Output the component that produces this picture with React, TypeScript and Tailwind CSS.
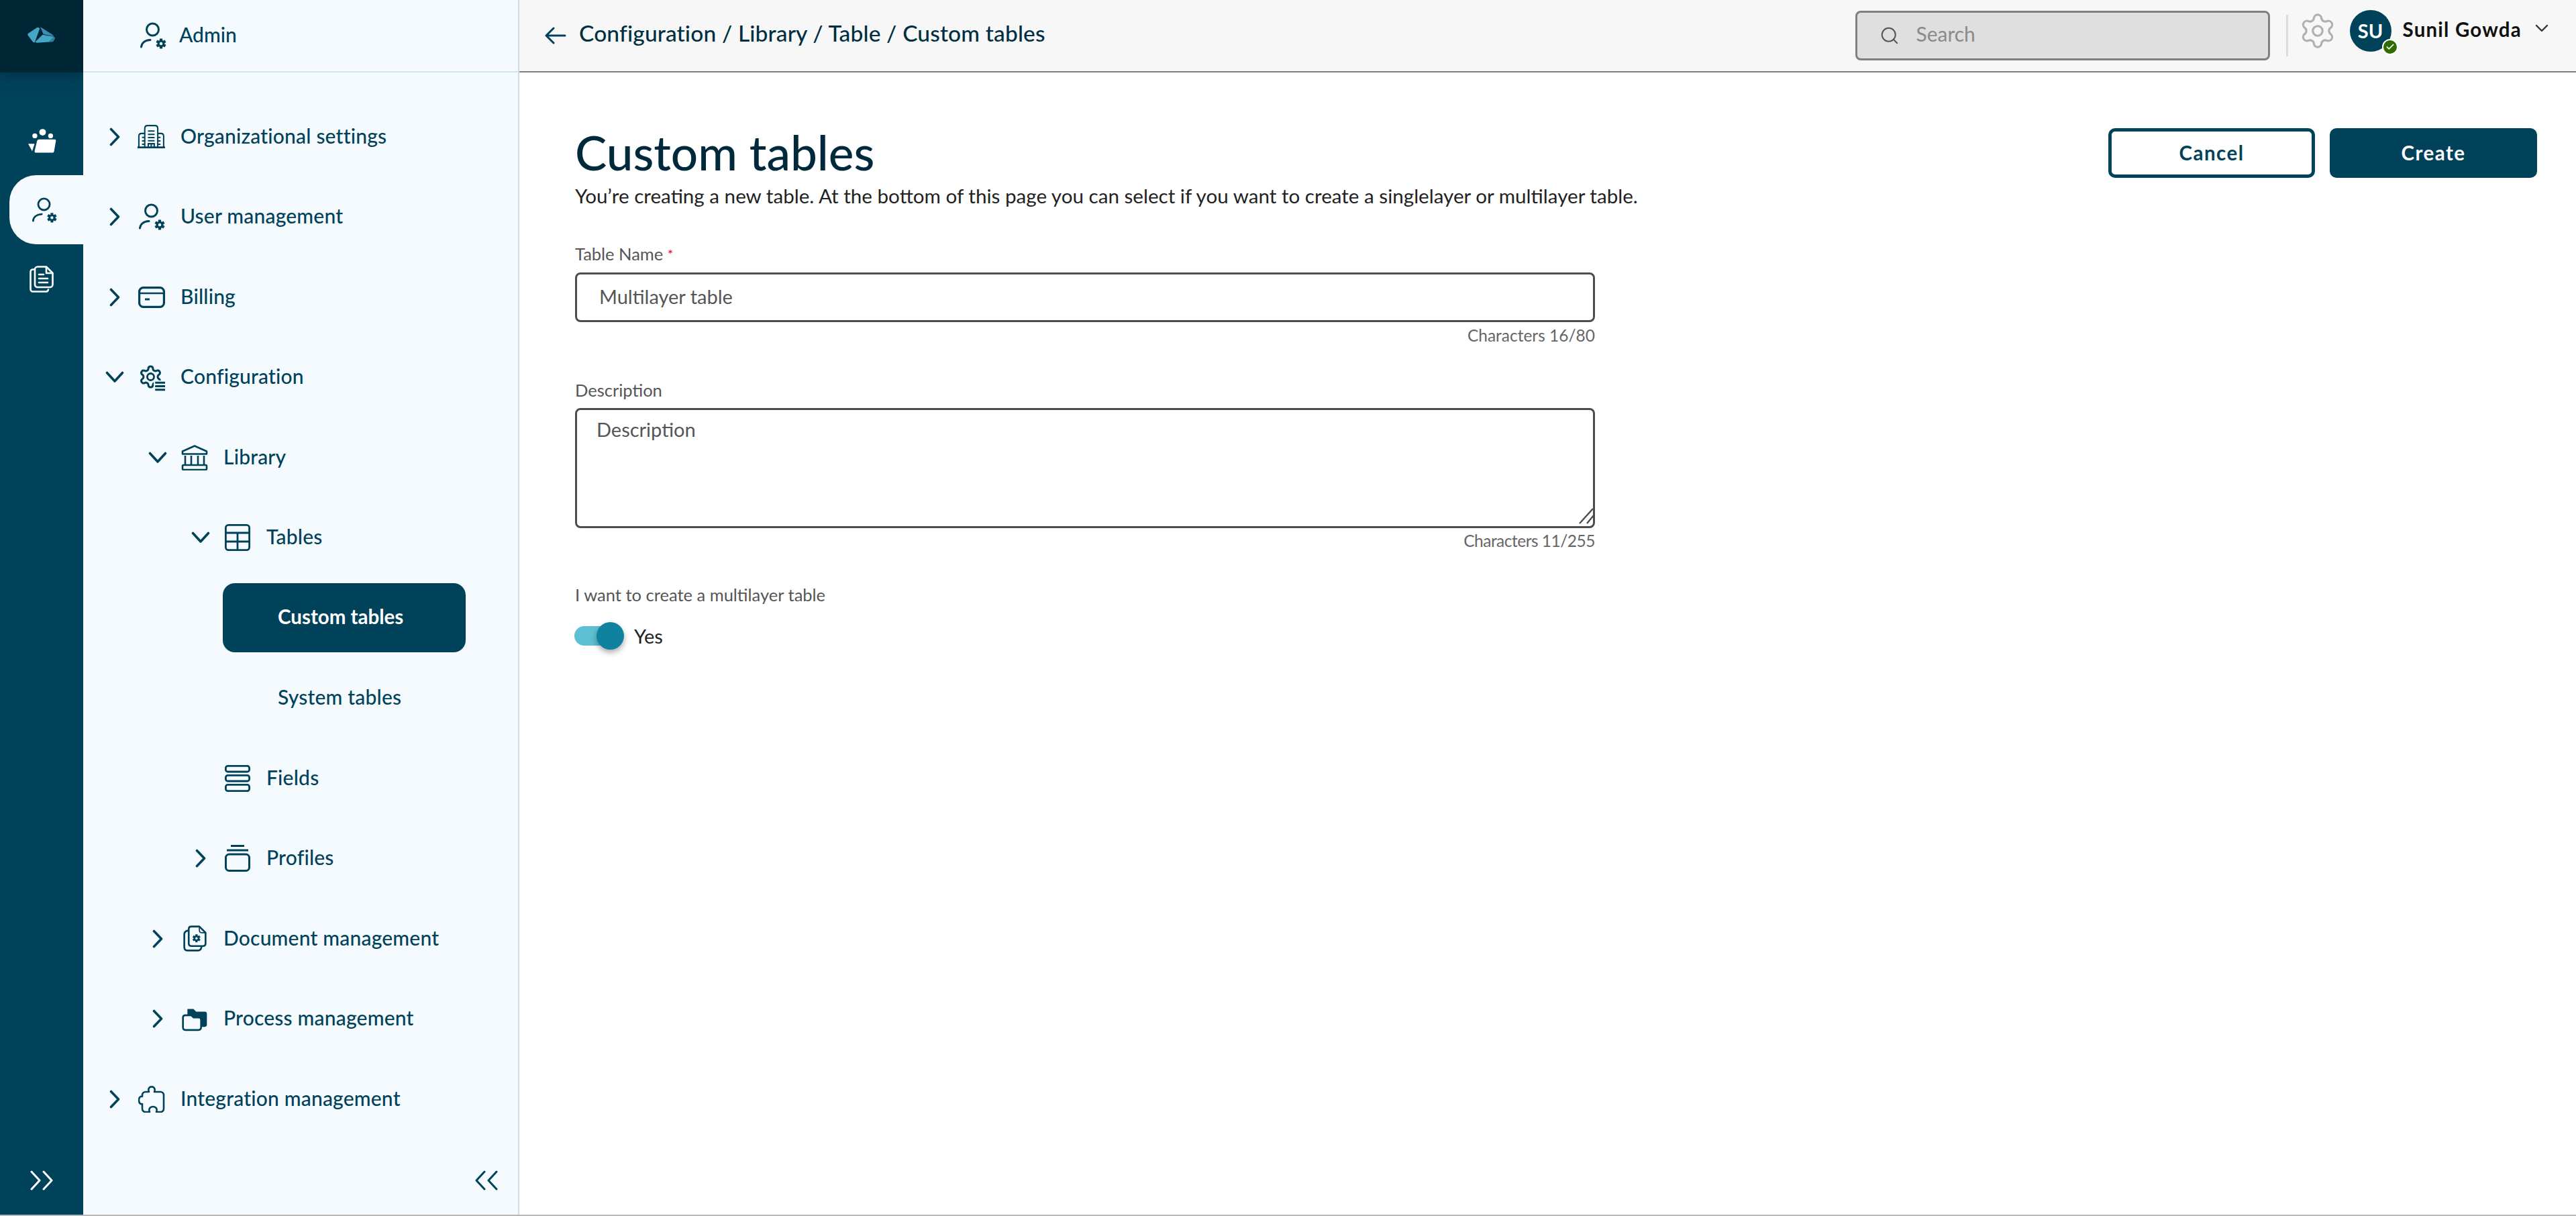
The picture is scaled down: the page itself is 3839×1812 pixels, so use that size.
import { useState } from "react";
import { Search, Settings, Check } from "lucide-react";

const GEAR =
  "M12.22 2h-.44a2 2 0 0 0-2 2v.18a2 2 0 0 1-1 1.73l-.43.25a2 2 0 0 1-2 0l-.15-.08a2 2 0 0 0-2.73.73l-.22.38a2 2 0 0 0 .73 2.73l.15.1a2 2 0 0 1 1 1.72v.51a2 2 0 0 1-1 1.74l-.15.09a2 2 0 0 0-.73 2.73l.22.38a2 2 0 0 0 2.73.73l.15-.08a2 2 0 0 1 2 0l.43.25a2 2 0 0 1 1 1.73V20a2 2 0 0 0 2 2h.44a2 2 0 0 0 2-2v-.18a2 2 0 0 1 1-1.73l.43-.25a2 2 0 0 1 2 0l.15.08a2 2 0 0 0 2.73-.73l.22-.39a2 2 0 0 0-.73-2.73l-.15-.08a2 2 0 0 1-1-1.74v-.5a2 2 0 0 1 1-1.74l.15-.09a2 2 0 0 0 .73-2.73l-.22-.38a2 2 0 0 0-2.73-.73l-.15.08a2 2 0 0 1-2 0l-.43-.25a2 2 0 0 1-1-1.73V4a2 2 0 0 0-2-2z";

// small solid cog used on the user and document icons
function Cog({ x, y, r, hole = "#f5faff" }: { x: number; y: number; r: number; hole?: string }) {
  return (
    <g>
      {[0, 60, 120, 180, 240, 300].map((a) => (
        <rect
          key={a}
          x={x - r * 0.28}
          y={y - r}
          width={r * 0.56}
          height={r * 0.6}
          fill="currentColor"
          transform={`rotate(${a} ${x} ${y})`}
        />
      ))}
      <circle cx={x} cy={y} r={r * 0.72} fill="currentColor" />
      <circle cx={x} cy={y} r={r * 0.3} fill={hole} />
    </g>
  );
}

function ChevRight() {
  return (
    <svg viewBox="0 0 16 28" className="w-[16px] h-[28px]" fill="none" stroke="currentColor" strokeWidth="3.6" strokeLinecap="round" strokeLinejoin="round">
      <path d="M2.5 2.5 13.5 14 2.5 25.5" />
    </svg>
  );
}

function ChevDown() {
  return (
    <svg viewBox="0 0 28 18" className="w-[28px] h-[18px]" fill="none" stroke="currentColor" strokeWidth="3.6" strokeLinecap="round" strokeLinejoin="round">
      <path d="M2.5 2.5 14 15 25.5 2.5" />
    </svg>
  );
}

function DoubleChev({ left = false }: { left?: boolean }) {
  return (
    <svg viewBox="0 0 34 30" className="w-[34px] h-[30px]" fill="none" stroke="currentColor" strokeWidth="3" strokeLinecap="round" strokeLinejoin="round">
      <path d={left ? "M14 2 2 15 14 28M32 2 20 15 32 28" : "M2 2 14 15 2 28M20 2 32 15 20 28"} />
    </svg>
  );
}

function UserCogIcon({ className = "w-[40px] h-[40px]" }: { className?: string }) {
  return (
    <svg viewBox="0 0 40 40" className={className} fill="none" stroke="currentColor" strokeWidth="3" strokeLinecap="round">
      <circle cx="19.5" cy="11" r="9" />
      <path d="M2.5 37C3 31 8 27 16 26.5" />
      <g stroke="none">
        <Cog x={32} y={32} r={7.5} />
      </g>
    </svg>
  );
}

function BuildingIcon() {
  return (
    <svg viewBox="12 25 150 125" className="w-[50px] h-[42px]" fill="none" stroke="currentColor" strokeWidth="7">
      <path d="M52 140V45Q52 30 67 30H103Q118 30 118 45V140" />
      <path d="M52 70H36Q22 70 22 84V140M118 70H134Q148 70 148 84V140" />
      <path d="M15 141H155" strokeWidth="9" />
      <path d="M68 58H102M68 75H102M68 91H102M68 107H102M70 140V122H100V140M85 122V140" />
      <path d="M38 90H50M38 108H50M38 125H50M120 90H132M120 108H132M120 125H132" />
    </svg>
  );
}

function CardIcon() {
  return (
    <svg viewBox="0 0 40 32" className="w-[40px] h-[32px]" fill="none" stroke="currentColor" strokeWidth="3.2">
      <rect x="1.6" y="1.6" width="36.8" height="28.8" rx="6" />
      <path d="M2 10h36" strokeWidth="2.6" />
      <path d="M10 19h7" strokeWidth="3" />
    </svg>
  );
}

function ConfigIcon() {
  return (
    <svg viewBox="30 35 125 125" className="w-[42px] h-[42px]" fill="none" stroke="currentColor">
      <path d={GEAR} transform="translate(32.8 40.8) scale(4.6)" strokeWidth="2" />
      <circle cx="88" cy="96" r="15" strokeWidth="8.5" />
      <rect x="102" y="112" width="54" height="50" fill="#f5faff" stroke="none" />
      <path d="M108 122H152M108 138H152M108 153H152" strokeWidth="9" />
    </svg>
  );
}

function BankIcon() {
  return (
    <svg viewBox="0 0 40 38" className="w-[40px] h-[38px]" fill="none" stroke="currentColor" strokeWidth="2.6" strokeLinejoin="round">
      <path d="M2 9.5 20 1.5l18 8v4H2z" />
      <path d="M6 16v13M15 16v13M25 16v13M34 16v13" />
      <rect x="2" y="30" width="36" height="7" rx="1.5" />
    </svg>
  );
}

function TableIcon() {
  return (
    <svg viewBox="0 0 38 40" className="w-[38px] h-[40px]" fill="none" stroke="currentColor" strokeWidth="2.8">
      <rect x="1.4" y="1.4" width="35.2" height="37.2" rx="4" />
      <path d="M2 13h34M2 26h34M19 13v26" />
    </svg>
  );
}

function FieldsIcon() {
  return (
    <svg viewBox="0 0 38 40" className="w-[38px] h-[40px]" fill="none" stroke="currentColor" strokeWidth="2.8">
      <rect x="1.4" y="1.4" width="35.2" height="8.6" rx="3" />
      <rect x="1.4" y="15.4" width="35.2" height="8.6" rx="3" />
      <rect x="1.4" y="29.4" width="35.2" height="9.2" rx="3" />
    </svg>
  );
}

function ProfilesIcon() {
  return (
    <svg viewBox="0 0 38 40" className="w-[38px] h-[40px]" fill="none" stroke="currentColor" strokeWidth="3">
      <path d="M9 1.5h20M3 8h32" />
      <rect x="1.5" y="14" width="35" height="24.5" rx="5" />
    </svg>
  );
}

function DocCogIcon() {
  return (
    <svg viewBox="22 14 112 124" className="w-[37px] h-[41px]" fill="none" stroke="currentColor" strokeWidth="8" strokeLinejoin="round" strokeLinecap="round">
      <path d="M62 22H98L126 50V98Q126 110 114 110H62Q50 110 50 98V34Q50 22 62 22Z" />
      <path d="M98 24V38Q98 50 110 50H124" strokeWidth="5" />
      <path d="M48 40Q30 42 30 58V115Q30 130 46 130H92Q106 130 108 112" />
      <g stroke="none">
        <Cog x={85} y={75} r={18} />
      </g>
    </svg>
  );
}

function FolderIcon() {
  return (
    <svg viewBox="20 388 114 104" className="w-[38px] h-[35px] mt-[3px]" fill="none" stroke="currentColor" strokeWidth="8" strokeLinejoin="round">
      <path d="M45 392H72L84 404H122Q132 404 132 414V462Q132 472 122 472H106V435H45Z" fill="currentColor" stroke="none" />
      <path d="M36 420H62L72 430H96Q106 430 106 440V474Q106 486 94 486H36Q25 486 25 474V430Q25 420 36 420Z" fill="#f5faff" />
    </svg>
  );
}

function PuzzleIcon() {
  return (
    <svg viewBox="0 0 40 40" className="w-[40px] h-[40px]" fill="none" stroke="currentColor" strokeWidth="2.6" strokeLinejoin="round">
      <path d="M11 9h5C14 4 17 1.4 20 1.4S26 4 24 9h9c3 0 5 2 5 5v20c0 3-2 5-5 5h-6c2-5-1-8-5-8s-7 3-5 8h-6c-3 0-5-2-5-5v-7c-4 1-5-3-5-6 0-4 3-6 5-5v-2c0-3 2-5 5-5z" />
    </svg>
  );
}

function TeamIcon() {
  return (
    <svg viewBox="120 572 130 114" className="w-[43px] h-[38px]" fill="white">
      <circle cx="188" cy="590" r="15" />
      <circle cx="153" cy="606" r="11" />
      <circle cx="224" cy="606" r="11" />
      <path d="M172 622h70q7 0 6 7l-8 45q-1 8-9 8h-72q-8 0-7-8l11-45q2-7 9-7z" />
      <path d="M123 642h29l-11 33z" />
    </svg>
  );
}

function DocsIcon() {
  return (
    <svg viewBox="0 0 36 40" className="w-[36px] h-[40px]" fill="none" stroke="white" strokeWidth="2.6" strokeLinejoin="round" strokeLinecap="round">
      <path d="M12 1.5h13l9.5 9.5v17a4 4 0 0 1-4 4H12a4 4 0 0 1-4-4v-22.5a4 4 0 0 1 4-4z" />
      <path d="M25 2v9h9" />
      <path d="M7.5 5.5H5a3.5 3.5 0 0 0-3.5 3.5v26a3.5 3.5 0 0 0 3.5 3.5h20a3.5 3.5 0 0 0 3-3" />
      <path d="M14 13h7M14 19h13M14 25h13" />
    </svg>
  );
}

function Logo() {
  return (
    <svg viewBox="0 0 192 126" className="w-[64px] h-[42px] mb-[6px]">
      <path d="M35 60 76 33Q82 31 88 37L66 98Q62 102 56 96L35 68Q32 64 35 60Z" fill="#46a6c8" />
      <path d="M90 30 146 66 151 72 104 63Z" fill="#3a8fb0" />
      <path d="M68 97 100 65 152 74 156 80 150 92Q148 97 142 97L76 101Q68 101 68 97Z" fill="#46a6c8" />
      <path d="M128 97 150 74 156 80 150 92Q148 97 142 97Z" fill="#2f7d9c" />
    </svg>
  );
}

type Item = {
  label: string;
  level: number;
  open?: boolean;
  icon: React.ReactNode;
};

const indent = ["pl-[27px]", "pl-[91px]", "pl-[155px]"];

const topItems: Item[] = [
  { label: "Organizational settings", level: 0, open: false, icon: <BuildingIcon /> },
  { label: "User management", level: 0, open: false, icon: <UserCogIcon /> },
  { label: "Billing", level: 0, open: false, icon: <CardIcon /> },
  { label: "Configuration", level: 0, open: true, icon: <ConfigIcon /> },
  { label: "Library", level: 1, open: true, icon: <BankIcon /> },
  { label: "Tables", level: 2, open: true, icon: <TableIcon /> },
];

const bottomItems: Item[] = [
  { label: "Fields", level: 2, icon: <FieldsIcon /> },
  { label: "Profiles", level: 2, open: false, icon: <ProfilesIcon /> },
  { label: "Document management", level: 1, open: false, icon: <DocCogIcon /> },
  { label: "Process management", level: 1, open: false, icon: <FolderIcon /> },
  { label: "Integration management", level: 0, open: false, icon: <PuzzleIcon /> },
];

function NavRow({ item }: { item: Item }) {
  return (
    <div className={`flex items-center h-[103px] shrink-0 ${indent[item.level]}`}>
      <div className="w-[40px] flex justify-center">
        {item.open === true && <ChevDown />}
        {item.open === false && <ChevRight />}
      </div>
      <div className="w-[44px] ml-[13px] flex justify-center">{item.icon}</div>
      <span className="ml-[21px] mb-[3px] text-[30px] tracking-[0.2px] font-medium whitespace-nowrap">{item.label}</span>
    </div>
  );
}

function Sidebar() {
  return (
    <aside className="w-[650px] shrink-0 h-full flex flex-col bg-[#f5faff] border-r-2 border-[#d3dbe2] text-[#00425a]">
      <div className="h-[108px] shrink-0 flex items-center pl-[84px] border-b-2 border-[#c9e8f0]">
        <UserCogIcon />
        <span className="ml-[19px] mb-[3px] text-[30px] font-medium">Admin</span>
      </div>
      <nav className="flex-1 flex flex-col gap-[16.5px] pt-[44px]">
        {topItems.map((item) => (
          <NavRow key={item.label} item={item} />
        ))}
        <div className="ml-[208px] w-[362px] h-[103px] shrink-0 rounded-[18px] bg-[#00425a] text-white flex items-center pl-[82px] pb-[3px] text-[29.5px] font-bold">
          Custom tables
        </div>
        <div className="ml-[208px] w-[362px] h-[103px] shrink-0 flex items-center pl-[82px] pb-[3px] text-[30px] tracking-[0.2px] font-medium">
          System tables
        </div>
        {bottomItems.map((item) => (
          <NavRow key={item.label} item={item} />
        ))}
      </nav>
      <div className="flex justify-end pr-[30px] pb-[36px]">
        <DoubleChev left />
      </div>
    </aside>
  );
}

function Rail() {
  return (
    <div className="w-[124px] shrink-0 h-full bg-[#00425a] flex flex-col">
      <div className="h-[108px] shrink-0 bg-[#002535] flex items-center justify-center shadow-[0_8px_16px_rgba(0,30,45,0.35)]">
        <Logo />
      </div>
      <div className="pt-[50px] flex flex-col">
        <div className="h-[103px] flex items-center justify-center">
          <TeamIcon />
        </div>
        <div className="ml-[14px] h-[103px] rounded-l-[40px] bg-[#f5faff] text-[#00425a] flex items-center pl-[33px]">
          <UserCogIcon className="w-[38px] h-[38px]" />
        </div>
        <div className="h-[103px] flex items-center justify-center">
          <DocsIcon />
        </div>
      </div>
      <div className="mt-auto flex justify-center text-white pb-[36px]">
        <DoubleChev />
      </div>
    </div>
  );
}

function TopBar() {
  return (
    <header className="h-[108px] shrink-0 bg-[#f7f7f7] border-b-2 border-[#808080] flex items-center justify-between pl-[38px] pr-[41px]">
      <div className="flex items-center text-[#002f42]">
        <svg viewBox="0 0 32 26" className="w-[32px] h-[26px] text-[#00425a]" fill="none" stroke="currentColor" strokeWidth="3" strokeLinecap="round" strokeLinejoin="round">
          <path d="M2 13h28M13 2 2 13l11 11" />
        </svg>
        <span className="ml-[19px] mb-[7px] text-[33.5px] tracking-[0.15px] font-medium whitespace-nowrap">
          Configuration / Library / Table / Custom tables
        </span>
      </div>
      <div className="flex items-center">
        <div className="w-[618px] h-[74px] rounded-[8px] border-[3px] border-[#808080] bg-[#dfdfdf] flex items-center pl-[33px]">
          <Search size={30} strokeWidth={1.6} className="text-[#555555]" />
          <span className="ml-[25px] mb-[6px] text-[30px] text-[#8a8a8a]">Search</span>
        </div>
        <div className="ml-[24px] w-[3px] h-[62px] bg-[#dddddd]" />
        <Settings size={58} strokeWidth={1.3} className="ml-[15px] mb-[14px] text-[#b0b0b0]" />
        <div className="relative ml-[19px] mb-[14px] w-[62px] h-[62px] rounded-full bg-[#00425a] text-white flex items-center justify-center text-[29px] font-bold">
          SU
          <span className="absolute -right-[10px] -bottom-[5px] w-[24px] h-[24px] rounded-full bg-[#2f6b00] border-2 border-white flex items-center justify-center">
            <Check size={14} strokeWidth={3} />
          </span>
        </div>
        <span className="ml-[17px] mb-[18px] text-[29.5px] font-bold tracking-[1.2px] text-[#111111] whitespace-nowrap">Sunil Gowda</span>
        <svg viewBox="0 0 20 12" className="ml-[20px] mb-[22px] w-[20px] h-[12px] text-[#333333]" fill="none" stroke="currentColor" strokeWidth="2.4" strokeLinecap="round" strokeLinejoin="round">
          <path d="M2 2l8 8 8-8" />
        </svg>
      </div>
    </header>
  );
}

function Main() {
  const [name] = useState("Multilayer table");

  return (
    <main className="flex-1 min-w-0 h-full flex flex-col bg-white">
      <TopBar />
      <div className="flex-1 pl-[83px] pr-[58px] pt-[83px]">
        <div className="flex justify-between items-start">
          <div>
            <h1 className="-mt-[2px] text-[71px] leading-[76px] font-medium text-[#002a3c]">Custom tables</h1>
            <p className="text-[29.6px] leading-[38px] text-[#222222] mt-[8px]">
              You’re creating a new table. At the bottom of this page you can select if you want to create a singlelayer or multilayer table.
            </p>
          </div>
          <div className="flex gap-[22px]">
            <button className="w-[308px] h-[74px] rounded-[10px] border-[5px] border-[#00425a] text-[#00425a] text-[29.5px] font-bold tracking-[1.5px]">
              Cancel
            </button>
            <button className="w-[309px] h-[74px] rounded-[10px] bg-[#00425a] text-white text-[29.5px] font-bold tracking-[1.5px]">
              Create
            </button>
          </div>
        </div>

        <div className="w-[1520px] mt-[52px]">
          <label className="block text-[25.5px] leading-[30px] text-[#555555]">
            Table Name <span className="text-[#e4002b] align-top text-[20px]">*</span>
          </label>
          <input
            readOnly
            value={name}
            className="block mt-[13px] w-full h-[74px] rounded-[8px] border-[3px] border-[#4d4d4d] pl-[33px] pb-[3px] text-[29px] text-[#555555] outline-none"
          />
          <div className="mt-[5px] text-right text-[24.5px] leading-[30px] text-[#666666]">Characters 16/80</div>

          <label className="block mt-[51px] text-[25.5px] leading-[30px] text-[#555555]">Description</label>
          <div className="relative mt-[12px] h-[179px]">
            <textarea
              readOnly
              placeholder="Description"
              className="block w-full h-full resize-none rounded-[8px] border-[3px] border-[#4d4d4d] pl-[29px] pt-[7px] text-[29px] placeholder:text-[#555555] outline-none"
            />
            <svg viewBox="0 0 24 24" className="absolute right-[1px] bottom-[6px] w-[24px] h-[24px] text-[#4d4d4d]" fill="none" stroke="currentColor" strokeWidth="2.4">
              <path d="M2 23 22 1M13 23 23 11" />
            </svg>
          </div>
          <div className="mt-[4px] text-right text-[24.5px] tracking-[-0.5px] leading-[30px] text-[#666666]">Characters 11/255</div>

          <label className="block mt-[50px] text-[25.5px] leading-[30px] text-[#555555]">I want to create a multilayer table</label>
          <div className="flex items-center mt-[25px] -ml-[1px]">
            <div className="relative w-[74px] h-[41px] flex items-center">
              <div className="w-[60px] h-[29px] rounded-full bg-[#5ec0d4]" />
              <div className="absolute right-0 top-0 w-[41px] h-[41px] rounded-full bg-[#0e829f] shadow-[0_4px_8px_rgba(0,0,0,0.35)]" />
            </div>
            <span className="ml-[15px] text-[29px] text-[#222222]">Yes</span>
          </div>
        </div>
      </div>
    </main>
  );
}

export default function App() {
  return (
    <div className="h-screen flex overflow-hidden border-b-2 border-[#b8b8b8] font-['Lato','Liberation_Sans',sans-serif]">
      <Rail />
      <Sidebar />
      <Main />
    </div>
  );
}
